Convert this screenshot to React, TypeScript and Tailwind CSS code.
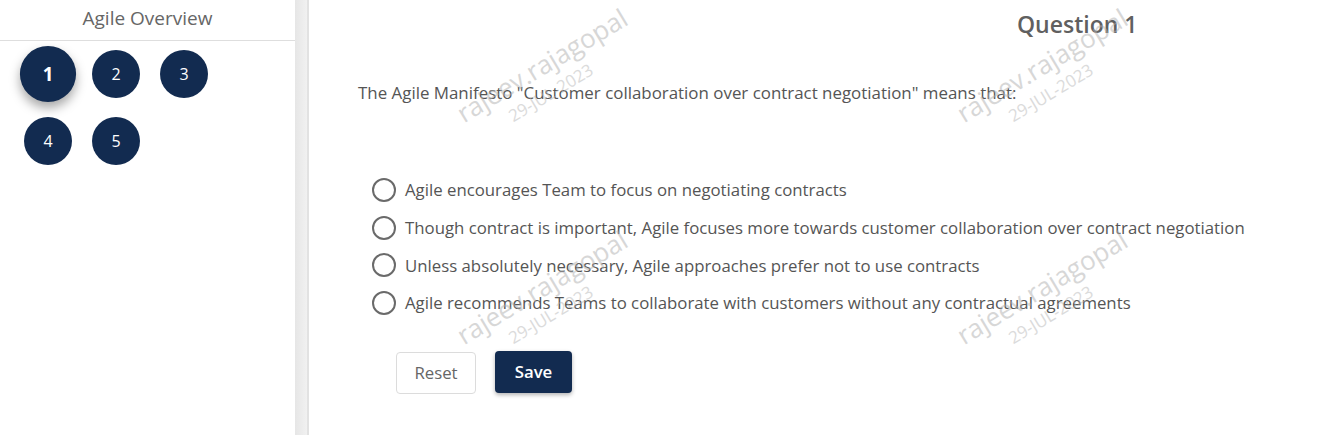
import React from "react";

const options = [
  "Agile encourages Team to focus on negotiating contracts",
  "Though contract is important, Agile focuses more towards customer collaboration over contract negotiation",
  "Unless absolutely necessary, Agile approaches prefer not to use contracts",
  "Agile recommends Teams to collaborate with customers without any contractual agreements",
];

function Watermark({ left, top }: { left: number; top: number }) {
  return (
    <div
      className="pointer-events-none absolute select-none"
      style={{ left, top }}
    >
      <div className="relative h-[130px] w-[200px]">
        <span className="absolute left-0 top-[52px] block -rotate-[31deg] text-[26px] leading-none text-[#b0b0b0] opacity-50">
          rajeev.rajagopal
        </span>
        <span className="absolute left-[58px] top-[84px] block -rotate-[31deg] text-[17px] leading-none text-[#b8b8b8] opacity-50">
          29-JUL-2023
        </span>
      </div>
    </div>
  );
}

export default function App() {
  const nums = [1, 2, 3, 4, 5];
  return (
    <div
      className="relative flex h-[435px] w-[1327px] overflow-hidden bg-white text-[#5f5f5f]"
      style={{ fontFamily: '"Open Sans", "Liberation Sans", sans-serif' }}
    >
      {/* sidebar */}
      <aside className="w-[295px] shrink-0">
        <div className="flex h-[41px] items-center justify-center border-b border-[#dedede] pb-[3px] text-[19px] text-[#666]">
          Agile Overview
        </div>
        <div className="grid grid-cols-[repeat(3,48px)] gap-x-[20px] gap-y-[19px] pl-[24px] pt-[9px]">
          {nums.map((n) => (
            <button
              key={n}
              className={
                n === 1
                  ? "flex h-[48px] w-[48px] scale-[1.17] items-center justify-center rounded-full bg-[#122b50] text-[16px] font-bold text-white shadow-[0_5px_9px_rgba(0,0,0,0.35)]"
                  : "flex h-[48px] w-[48px] items-center justify-center rounded-full bg-[#122b50] text-[16px] font-medium text-white"
              }
            >
              {n}
            </button>
          ))}
        </div>
      </aside>

      {/* divider */}
      <div className="w-[14px] shrink-0 border-r-2 border-[#e2e2e2] bg-gradient-to-r from-[#e6e6e6] to-[#f1f1f1]" />

      {/* main */}
      <main className="flex-1 pl-[49px]">
        <h2 className="ml-[659px] pt-[7px] text-[23px] font-semibold leading-[34px] text-[#606060]">
          Question 1
        </h2>
        <p className="mt-[40px] text-[16.9px] leading-[24px] text-[#555]">
          The Agile Manifesto "Customer collaboration over contract negotiation" means that:
        </p>
        <div className="mt-[73px] flex flex-col gap-[13.7px] pl-[14px]">
          {options.map((o) => (
            <label key={o} className="flex h-[24px] items-center gap-[9px] text-[16.8px] text-[#555]">
              <span className="h-[24px] w-[24px] shrink-0 rounded-full border-2 border-[#6a6a6a]" />
              <span>{o}</span>
            </label>
          ))}
        </div>
        <div className="mt-[36px] flex items-start gap-[19px] pl-[38px]">
          <button className="mt-[1px] h-[42px] w-[80px] rounded-[4px] border border-[#dcdcdc] bg-white text-[16.8px] text-[#666]">
            Reset
          </button>
          <button className="h-[42px] w-[77px] rounded-[4px] bg-[#122b50] text-[16.8px] font-semibold text-white shadow-[0_2px_4px_rgba(0,0,0,0.3)]">
            Save
          </button>
        </div>
      </main>

      <Watermark left={445} top={0} />
      <Watermark left={945} top={0} />
      <Watermark left={445} top={222} />
      <Watermark left={945} top={222} />
    </div>
  );
}
